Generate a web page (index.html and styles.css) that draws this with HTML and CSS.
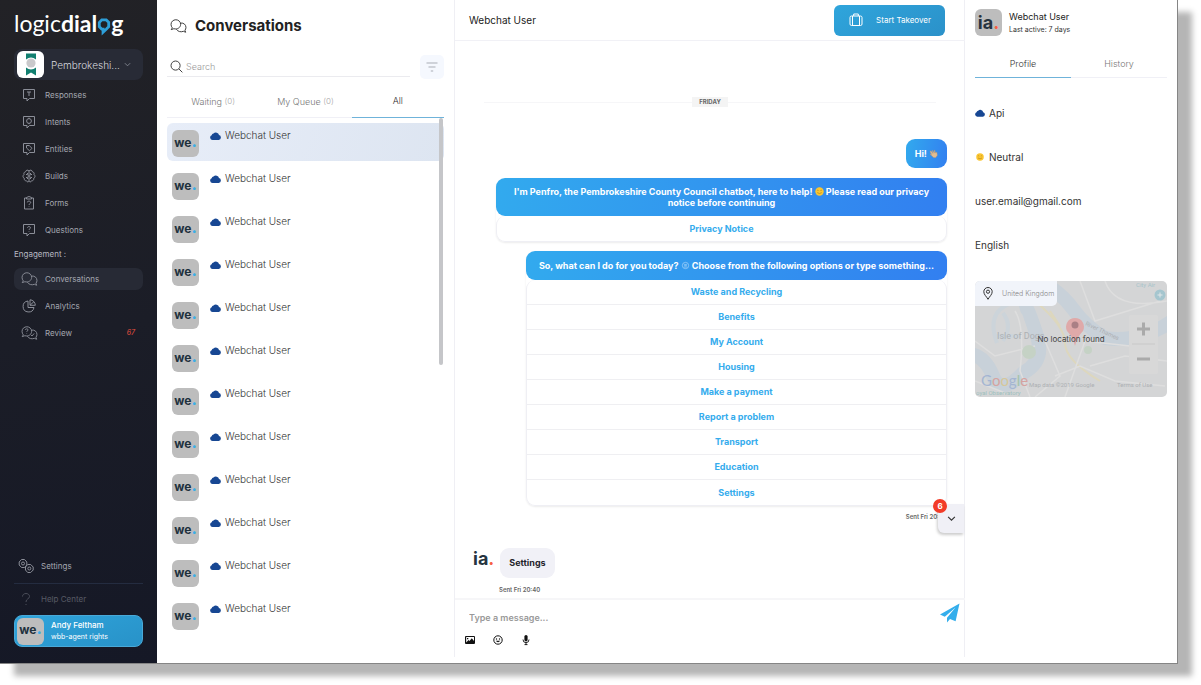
FILE: index.html
```html
<!DOCTYPE html>
<html lang="en">
<head>
<meta charset="utf-8">
<title>Conversations - logicdialog</title>
<link rel="stylesheet" href="styles.css">
</head>
<body>
<svg class="defs" aria-hidden="true">
  <symbol id="chats" viewBox="0 0 18 15"><path d="M2.400 9.500 1.200 11.400 4 10.400C8 11.500 11.300 9 11.300 5.700 11.300 3 9 .8 6.200 .8 3.300 .8 1 3 1 5.700 1 7.200 1.500 8.500 2.400 9.500M11.200 4.400C14.600 3.800 17 6.200 17 9 17 10.200 16.600 11.300 15.900 12.100L16.700 14.200 14.200 13.200C11.500 14.300 8.100 13.500 6.700 10.900"/></symbol>
  <symbol id="bubble" viewBox="0 0 14 14"><path d="M1.500 1.500H12.500V10.500H7.500L5 13V10.500H1.500Z"/></symbol>
  <symbol id="cloud" viewBox="0 0 11 8"><path d="M2.500 8A2.500 2.500 0 0 1 1.700 3.200 2 2 0 0 1 3.500 1.600 3.200 3.200 0 0 1 9 3.100 2.500 2.500 0 0 1 8.700 8Z"/></symbol>
  <symbol id="smile" viewBox="0 0 10 10"><circle cx="5" cy="5" r="4.700" fill="#fbc631"/><path d="M2.300 3.900Q3.200 3 4 3.900M6 3.900Q6.800 3 7.700 3.900M2.500 6.200Q5 8.400 7.500 6.200" fill="none" stroke="#a87a20" stroke-width=".7"/></symbol>
</svg>
<div class="app">
  <aside class="sidebar">
    <a class="logo" href="#" aria-label="logicdialog"><span class="thin">logic</span><span>dial</span><svg viewBox="0 0 14 17"><path d="M6 15V11.800H4.500L2 9.300V4.800L4.600 2H9.400L12 4.600V9.200L9.600 11.600Z"/></svg><span>g</span></a>
    <button class="switcher"><span class="crest"><svg viewBox="0 0 12 22"><path d="M1 0H11V6Q6 2 1 6ZM1 14Q6 18 11 14V22L6 19 1 22Z" fill="#117f70"/><circle cx="6" cy="9.500" r="4.600" fill="#c9c9cb"/></svg></span><span class="switcher-name">Pembrokeshi...</span><svg class="chev" viewBox="0 0 8 8"><path d="M1 2.500 4 5.500 7 2.500"/></svg></button>
    <nav class="nav">
      <a href="#"><svg viewBox="0 0 14 14"><use href="#bubble"/><path d="M5 4H9M7 4V8"/></svg>Responses</a>
      <a href="#"><svg viewBox="0 0 14 14"><use href="#bubble"/><circle cx="7" cy="6" r="2.400"/><path d="M7 2.700V4M7 8V9.200"/></svg>Intents</a>
      <a href="#"><svg viewBox="0 0 14 14"><use href="#bubble"/><path d="M4.500 3.500H7.200L10 6.300 7.500 8.800 4.500 6ZM6 5h.1"/></svg>Entities</a>
      <a href="#"><svg viewBox="0 0 14 14"><path d="M7 2C6 .5 3.800 1 3.700 2.700 2 3 1.600 4.500 2 5.500.6 6.500.7 8.500 2.200 9.200 2 11 3.200 12 4.500 11.800 5 13.300 6.500 13.200 7 12V2C8 .5 10.200 1 10.300 2.700 12 3 12.400 4.500 12 5.500 13.400 6.500 13.300 8.500 11.800 9.200 12 11 10.800 12 9.500 11.800 9 13.300 7.500 13.200 7 12M4 5.500H5.500V4M4 8.500H5.500V10M10 5.500H8.500V4M10 8.500H8.500V10M5.500 7H8.500"/></svg>Builds</a>
      <a href="#"><svg viewBox="0 0 14 14"><path d="M4.500 2H2.500V13H11.500V2H9.500M4.500 3V1.500L7 .5 9.500 1.500V3ZM5.300 6.300C5.300 4.700 8.700 4.700 8.700 6.500 8.700 7.700 7 7.600 7 9M7 10.500V11"/></svg>Forms</a>
      <a href="#"><svg viewBox="0 0 14 14"><use href="#bubble"/><path d="M5.500 4.700C5.500 3.200 8.500 3.200 8.500 4.800 8.500 5.800 7 5.800 7 7M7 8.300V8.900"/></svg>Questions</a>
      <h2>Engagement :</h2>
      <a href="#" class="current"><svg class="wide" viewBox="0 0 18 15"><use href="#chats"/></svg>Conversations</a>
      <a href="#"><svg viewBox="0 0 14 14"><path d="M6 2A5.500 5.500 0 1 0 12 8.500H6ZM8 .8V6.300H13.300A5.500 5.500 0 0 0 8 .8ZM8 6.300 12 2.500"/></svg>Analytics</a>
      <a href="#"><svg class="wide" viewBox="0 0 18 15"><use href="#chats"/><path d="M4.500 4.200C4.500 2.700 7.500 2.700 7.500 4.300 7.500 5.200 6 5.200 6 6.200M6 7.500V8M10.500 9.500 11.700 10.700 14 8"/></svg>Review<em>67</em></a>
    </nav>
    <div class="side-foot">
      <a href="#"><svg class="gears" viewBox="0 0 16 14"><path d="M3.500 .5H6.500L8.800 3V6L6.500 8.500H3.500L1.200 6V3ZM9.700 5.500H12.700L15.200 8V11L12.700 13.500H9.700L7.500 11V8Z"/><circle cx="5" cy="4.500" r="1.500"/><circle cx="11.300" cy="9.500" r="1.500"/></svg>Settings</a>
      <hr>
      <a href="#" class="dim"><svg class="gears" viewBox="0 0 16 14"><path d="M4.500 4.500C4.500.5 11.500.5 11.500 4.500 11.500 7 8 6.500 8 10M8 12V13"/></svg>Help Center</a>
      <button class="me"><span class="we">we<i>.</i></span><span class="me-text"><b>Andy Feltham</b><span>wbb-agent rights</span></span></button>
    </div>
  </aside>

  <section class="list-pane">
    <h1><svg viewBox="0 0 18 15"><use href="#chats"/></svg>Conversations</h1>
    <div class="search-row">
      <label class="search"><svg viewBox="0 0 14 14"><circle cx="6" cy="6" r="4.900"/><path d="M9.600 9.600 13.300 13.300"/></svg><input type="search" placeholder="Search" aria-label="Search"></label>
      <button class="filter" aria-label="Filter"><svg viewBox="0 0 12 10"><path d="M.5 1H11.500M2.500 5H9.500M4.800 9H7.200"/></svg></button>
    </div>
    <div class="tabs"><button>Waiting <small>(0)</small></button><button>My Queue <small>(0)</small></button><button class="on">All</button></div>
    <div class="rows">
      <button class="row selected"><span class="we">we<i>.</i></span><svg><use href="#cloud"/></svg><span>Webchat User</span></button>
      <button class="row"><span class="we">we<i>.</i></span><svg><use href="#cloud"/></svg><span>Webchat User</span></button>
      <button class="row"><span class="we">we<i>.</i></span><svg><use href="#cloud"/></svg><span>Webchat User</span></button>
      <button class="row"><span class="we">we<i>.</i></span><svg><use href="#cloud"/></svg><span>Webchat User</span></button>
      <button class="row"><span class="we">we<i>.</i></span><svg><use href="#cloud"/></svg><span>Webchat User</span></button>
      <button class="row"><span class="we">we<i>.</i></span><svg><use href="#cloud"/></svg><span>Webchat User</span></button>
      <button class="row"><span class="we">we<i>.</i></span><svg><use href="#cloud"/></svg><span>Webchat User</span></button>
      <button class="row"><span class="we">we<i>.</i></span><svg><use href="#cloud"/></svg><span>Webchat User</span></button>
      <button class="row"><span class="we">we<i>.</i></span><svg><use href="#cloud"/></svg><span>Webchat User</span></button>
      <button class="row"><span class="we">we<i>.</i></span><svg><use href="#cloud"/></svg><span>Webchat User</span></button>
      <button class="row"><span class="we">we<i>.</i></span><svg><use href="#cloud"/></svg><span>Webchat User</span></button>
      <button class="row"><span class="we">we<i>.</i></span><svg><use href="#cloud"/></svg><span>Webchat User</span></button>
      <span class="thumb"></span>
    </div>
  </section>

  <main class="chat">
    <header><h2>Webchat User</h2><button class="takeover"><svg viewBox="0 0 14 14"><path d="M2.500 3H11.500Q13 3 13 4.500V11Q13 12.500 11.500 12.500H2.500Q1 12.500 1 11V4.500Q1 3 2.500 3ZM3.500 3V12.500M10.500 3V12.500M4.700 3V1H9.300V3"/></svg>Start Takeover</button></header>
    <div class="messages">
      <div class="day"><span>FRIDAY</span></div>
      <p class="bubble hi">Hi! <svg viewBox="0 0 10 10"><path d="M2 2 4.500 5 3.700 1.300 6 4.500 6 1 7.500 4.500 8.700 3.500 9.200 7 7.500 9.500H5.200L1 5.500 3 6 1.200 3Z" fill="#e2bd91" stroke="#c79a6b" stroke-width=".5"/></svg></p>
      <div class="card wide-card">
        <p class="bubble">I'm Penfro, the Pembrokeshire County Council chatbot, here to help! <svg><use href="#smile"/></svg> Please read our privacy notice before continuing</p>
        <div class="options"><button>Privacy Notice</button></div>
      </div>
      <div class="card menu-card">
        <p class="bubble">So, what can I do for you today? <svg class="glyph" viewBox="0 0 10 10"><circle cx="5" cy="5" r="3.500"/><path d="M3.500 3.800H6.500M3.500 5.200H6.500M3.500 6.700H6.500"/></svg> Choose from the following options or type something...</p>
        <div class="options"><button>Waste and Recycling</button><button>Benefits</button><button>My Account</button><button>Housing</button><button>Make a payment</button><button>Report a problem</button><button>Transport</button><button>Education</button><button>Settings</button></div>
      </div>
      <time class="sent">Sent Fri 20:40</time>
      <div class="reply"><span class="ia">ia<i>.</i></span><p>Settings</p></div>
      <time class="sent left">Sent Fri 20:40</time>
      <button class="jump" aria-label="Jump to latest, 6 new"><span class="count">6</span><svg viewBox="0 0 8 8"><path d="M1 2.500 4 5.500 7 2.500"/></svg></button>
    </div>
    <form class="composer">
      <div class="compose-line"><input type="text" placeholder="Type a message..." aria-label="Message"><button type="button" aria-label="Send"><svg class="plane" viewBox="0 0 20 20"><path d="M19.500.5 0 11.500 4.800 13.700 15.500 4.500 7 14.700V19.500L10 15.900 15.600 18.200Z"/></svg></button></div>
      <div class="tools">
        <button type="button" aria-label="Image"><svg viewBox="0 0 10 10"><path fill-rule="evenodd" d="M1 1H9Q10 1 10 2V8Q10 9 9 9H1Q0 9 0 8V2Q0 1 1 1ZM1.200 7.500 3.500 5 4.500 6 6.800 3.300 9 6V2H1.200ZM2 3H3.300V4.200H2Z"/></svg></button>
        <button type="button" aria-label="Emoji"><svg viewBox="0 0 10 10"><circle cx="5" cy="5" r="4.200" fill="none" stroke="#111"/><circle cx="3.500" cy="4" r=".7"/><circle cx="6.500" cy="4" r=".7"/><path d="M2.700 5.800Q5 8.700 7.300 5.800Z"/></svg></button>
        <button type="button" aria-label="Voice"><svg viewBox="0 0 10 10"><rect x="3.400" y="0" width="3.200" height="6.400" rx="1.600"/><path d="M2 4.500Q2 7.700 5 7.700 8 7.700 8 4.500M5 7.700V10M3.500 9.600H6.500" fill="none" stroke="#111" stroke-width=".9"/></svg></button>
      </div>
    </form>
  </main>

  <aside class="profile">
    <div class="who"><span class="ia boxed">ia<i>.</i></span><div><h2>Webchat User</h2><p>Last active: 7 days</p></div></div>
    <div class="tabs"><button class="on">Profile</button><button>History</button></div>
    <ul>
      <li><svg><use href="#cloud"/></svg>Api</li>
      <li><svg><use href="#smile"/></svg>Neutral</li>
      <li>user.email@gmail.com</li>
      <li>English</li>
    </ul>
    <div class="map">
      <svg class="map-art" viewBox="0 0 192 116" preserveAspectRatio="xMidYMid slice">
        <path d="M-5 73Q10 75 18 95T48 92Q70 80 62 55T52 28Q45 10 60 -5M58 -5Q85 10 98 28T130 57Q165 62 197 40" fill="none" stroke="#c8d1d9" stroke-width="14"/>
        <path d="M22 62Q12 35 30 25T60 20M18 55H45M28 60Q38 45 28 32" fill="none" stroke="#ccd4da" stroke-width="4"/>
        <path d="M60 20Q90 45 90 62T125 100M75 30 85 45" fill="none" stroke="#ddd7bd" stroke-width="2"/>
        <path d="M0 60 20 75 60 65M40 30Q50 45 45 90L55 116M80 95 105 85 140 100 190 105M90 116 110 60 155 65M105 0 120 40 185 20M130 0Q140 30 192 20M115 85 150 75 192 80M70 60 85 95 60 116M0 100 30 112" fill="none" stroke="#dedede" stroke-width="1.500"/>
        <circle cx="54" cy="71" r="7" fill="#c5d2c5"/><circle cx="113" cy="69" r="4" fill="#c5d2c5"/>
        <circle cx="185" cy="14" r="5.500" fill="#a5c6cf"/><path d="M182.500 14H187.500M185 11.500V16.500" stroke="#e2e6e8"/>
        <path d="M100 65Q98 56 92 50A9 9 0 1 1 108 50Q102 56 100 65Z" fill="#dfa9a9"/><circle cx="100" cy="44" r="3.500" fill="#aa8085"/>
        <rect x="154" y="34" width="29" height="59" rx="2" fill="#d8d8d8"/><path d="M157 63H180" stroke="#c8c8c8"/><path d="M162 48H175M168.500 41.500V54.500M162 78H175" stroke="#aaa" stroke-width="3"/>
        <g class="map-text"><text x="22" y="58">Isle of Dogs</text><text x="161" y="6" class="fine" fill="#a7c3ca">City Air</text><text x="110" y="44" transform="rotate(25 110 44)" class="fine">River Thames</text><text x="1" y="114" class="fine" fill="#9dbfbd">oyal Observatory</text><text x="54" y="106" class="fine">Map data ©2019 Google</text><text x="142" y="106" class="fine">Terms of Use</text></g>
        <text x="6" y="105" class="google"><tspan fill="#a4b5d2">G</tspan><tspan fill="#d6a3a0">o</tspan><tspan fill="#d7c79a">o</tspan><tspan fill="#a4b5d2">g</tspan><tspan fill="#a4c3ab">l</tspan><tspan fill="#d6a3a0">e</tspan></text>
      </svg>
      <span class="country"><svg viewBox="0 0 10 13"><path d="M5 12.300C3.500 9.500.8 7.500.8 4.700A4.200 4.200 0 0 1 9.200 4.700C9.200 7.500 6.500 9.500 5 12.300Z"/><circle cx="5" cy="4.700" r="1.600"/></svg>United Kingdom</span>
      <span class="none">No location found</span>
    </div>
  </aside>
</div>
</body>
</html>
```

FILE: styles.css
```css
* { box-sizing: border-box; }
body {
  margin: 0;
  min-height: 100vh;
  padding: 0 23px 21px 0;
  display: grid;
  background: #fff;
  color: #333;
  font: 10px/14px Inter, "Liberation Sans", sans-serif;
  overflow: hidden;
}
h1, h2, p, ul { margin: 0; padding: 0; font-weight: 400; }
button { border: 0; padding: 0; background: none; font: inherit; color: inherit; text-align: inherit; }
input { border: 0; padding: 0; background: none; font: inherit; outline: 0; min-width: 0; }
a { color: inherit; text-decoration: none; }
i { font-style: normal; }
svg { flex: none; overflow: visible; }
.defs { position: absolute; width: 0; height: 0; }

.app {
  display: grid;
  grid-template-columns: 157px 298px minmax(0, 1fr) 212px;
  background: #fff;
  border: solid #858585;
  border-width: 0 1px 1px 0;
  box-shadow: 14px 12px 6px #b5b5b5;
}

/* Sidebar */
.sidebar {
  display: flex;
  flex-direction: column;
  padding: 8px 14px 16px;
  background: linear-gradient(170deg, #222226 0%, #1b1d27 50%, #151826 100%);
  color: #a4a7b0;
  font-size: 8px;
}
.logo {
  display: flex;
  align-items: center;
  height: 30px;
  margin-bottom: 11px;
  color: #fff;
  font: 700 23px/28px Lato, sans-serif;
}
.logo .thin { font-weight: 400; }
.logo svg { width: 14px; height: 16px; margin-top: 6px; fill: none; stroke: #2e9fd9; stroke-width: 3; }
.switcher {
  display: flex;
  align-items: center;
  height: 31px;
  margin-bottom: 4px;
  padding: 0 12px 0 3px;
  border-radius: 8px;
  background: #282b36;
  color: #d7d9df;
  font-size: 10px;
  font-weight: 300;
}
.crest { display: grid; place-items: center; width: 27px; height: 27px; border-radius: 6px; background: #fff; }
.crest svg { width: 12px; height: 23px; }
.switcher-name { flex: 1; padding-left: 7px; }
.chev { width: 7px; height: 7px; fill: none; stroke: #858994; }
.nav, .side-foot { display: flex; flex-direction: column; }
.nav { gap: 5px; }
.nav a, .side-foot a {
  display: flex;
  align-items: center;
  height: 22px;
  padding: 0 8px;
  border-radius: 7px;
}
.nav svg, .side-foot svg { width: 14px; height: 14px; margin-right: 9px; fill: none; stroke: #8b8e98; stroke-width: 1; }
.nav svg.wide { width: 17px; height: 14px; margin: 0 7px 0 -1px; }
.nav h2 { height: 17px; font-size: 8px; line-height: 17px; color: #b6b9c1; }
.nav .current { background: #272a35; }
.nav em { margin-left: auto; color: #e8503f; font-size: 7px; }
.side-foot { margin-top: auto; }
.side-foot a { padding: 0 4px; }
.side-foot a svg { width: 16px; margin-right: 7px; }
.side-foot hr { width: 100%; margin: 6px 0 4px; border: 0; border-top: 1px solid #242c40; }
.side-foot .dim { opacity: .45; }
.me {
  display: flex;
  align-items: center;
  height: 32px;
  margin-top: 5px;
  padding: 0 2px;
  border-radius: 8px;
  border: 1px solid #49a9d8;
  background: linear-gradient(160deg, #2fa4db, #2892c8);
  color: #fff;
}
.me-text { display: grid; line-height: 12px; padding-left: 7px; font-size: 7px; }
.me-text b { font-size: 8px; font-weight: 500; }
.we {
  display: grid;
  grid-auto-flow: column;
  place-content: center;
  align-items: baseline;
  width: 27px;
  height: 27px;
  padding-bottom: 2px;
  border-radius: 6px;
  background: #bdbdbd;
  color: #1e313e;
  font: 700 12px/22px Inter, sans-serif;
}
.we i { color: #38ade8; font-size: 16px; line-height: 16px; }

/* Conversation list */
.list-pane { padding: 15px 11px 6px 10px; }
.list-pane, .chat { background: linear-gradient(#efeff4, #efeff4) right top / 1px calc(100% - 6px) no-repeat; }
h1 { display: flex; align-items: center; height: 22px; font: 700 15px/22px Inter, sans-serif; color: #222; }
h1 svg { width: 17px; height: 14px; margin: 0 8px 0 3px; fill: none; stroke: #333; stroke-width: 1; }
.search-row { display: flex; gap: 10px; align-items: center; margin-top: 18px; }
.search { display: flex; align-items: center; gap: 3px; flex: 1; height: 20px; padding-left: 3px; border-bottom: 1px solid #ebebef; }
.search svg { width: 13px; height: 13px; fill: none; stroke: #333; stroke-width: 1; }
.search input { flex: 1; font-size: 9px; font-weight: 300; }
::placeholder { color: #999; opacity: 1; }
.filter { display: grid; place-items: center; width: 24px; height: 24px; border-radius: 5px; background: #f5f8fe; }
.filter svg { width: 12px; height: 10px; fill: none; stroke: #a9adb5; stroke-width: 1; }
.tabs { display: flex; border-bottom: 1px solid #f0f0f6; }
.tabs button { flex: 1; height: 33px; margin-bottom: -1px; text-align: center; font-size: 9px; font-weight: 300; color: #777; border-bottom: 1px solid transparent; }
.tabs small { font-size: 8px; color: #aaa; vertical-align: 1px; }
.tabs .on { color: #333; border-color: #6fb3da; }
.list-pane .tabs { margin-top: 6px; }
.rows { position: relative; display: grid; gap: 5px; padding-top: 5px; }
.row { display: flex; align-items: flex-start; height: 38px; padding: 6px 5px 0; border-radius: 6px; line-height: 13px; font-weight: 300; color: #333; }
.row.selected { background: linear-gradient(110deg, #e7edf8, #dde5f1); }
.row svg { width: 11px; height: 8px; margin: 3px 4px 0 11px; fill: #174793; }
.row .we { margin-top: 1px; }
.thumb { position: absolute; top: 0; right: 1px; width: 4px; height: 247px; border-radius: 2px; background: #c5c6c9; }

/* Chat */
.chat { display: flex; flex-direction: column; font-weight: 700; }
.chat header { display: flex; align-items: center; justify-content: space-between; height: 41px; padding: 0 20px 0 14px; border-bottom: 1px solid #f1f1f6; }
.chat header h2 { font-size: 10px; color: #222; }
.takeover { display: flex; align-items: center; gap: 13px; height: 31px; padding: 0 14px 0 15px; border-radius: 6px; background: linear-gradient(150deg, #2fa5dc, #2b91c9); color: #fff; font-weight: 400; font-size: 8px; }
.takeover svg { width: 14px; height: 14px; fill: none; stroke: #fff; stroke-width: 1; }
.messages { position: relative; flex: 1; display: flex; flex-direction: column; align-items: flex-end; padding: 55px 18px 0; font-size: 9px; }
.day { display: flex; align-items: center; align-self: stretch; gap: 0; margin: 0 11px 31px; height: 12px; }
.day::before, .day::after { content: ""; flex: 1; height: 1px; background: #f6f6f8; }
.day span { padding: 0 7px; background: #f4f4f4; color: #666; font-size: 6px; line-height: 10px; }
.bubble { padding: 9px 8px; border-radius: 9px; background: linear-gradient(100deg, #32aaee, #327ff0); color: #fff; font-weight: 700; line-height: 11px; text-align: center; }
.bubble svg { width: 9px; height: 9px; vertical-align: -1px; }
.bubble .glyph { fill: none; stroke: #b6dafa; stroke-width: .7; }
.hi { padding: 9px; margin-bottom: 10px; }
.card { border-radius: 9px; box-shadow: 0 1px 2px #00000014; }
.wide-card { width: 451px; max-width: 100%; margin-bottom: 9px; }
.wide-card .bubble { padding: 8px 10px; }
.menu-card { width: 421px; max-width: 100%; }
.options { display: grid; border: 1px solid #efeff4; border-top: 0; border-radius: 9px; }
.options button { height: 25px; text-align: center; color: #35aced; border-bottom: 1px solid #efeff2; }
.options button:last-child { border: 0; }
.sent { margin: 5px 0 0; font-size: 6px; line-height: 12px; color: #666; font-weight: 600; }
.reply { display: flex; align-self: flex-start; gap: 6px; margin-top: 25px; }
.reply p { padding: 8px 9px; border-radius: 9px; background: #f1f1f7; color: #24242c; font-weight: 700; }
.ia { color: #273440; font: 700 18px/22px Inter, sans-serif; }
.ia i { color: #f75f45; }
.sent.left { align-self: flex-start; margin: 6px 0 0 26px; }
.jump { position: absolute; right: 1px; bottom: 65px; display: grid; place-items: center; width: 26px; height: 29px; border-radius: 2px 0 0 6px; background: #f0f0f6; box-shadow: -1px 2px 3px #0003; }
.jump svg { width: 9px; height: 9px; fill: none; stroke: #333; stroke-width: 1; }
.count { position: absolute; top: -5px; left: -5px; width: 14px; height: 14px; border-radius: 50%; background: #f23c28; color: #fff; font-size: 8px; line-height: 14px; text-align: center; }
.composer { height: 65px; padding: 6px 5px 0 14px; border-top: 2px solid #f6f6f8; }
.compose-line { display: flex; align-items: center; height: 24px; }
.compose-line input { flex: 1; font-size: 9px; font-weight: 600; }
.plane { display: block; width: 20px; height: 20px; margin-top: -10px; fill: #34aeec; }
.tools { display: flex; gap: 18px; margin-left: -4px; padding-top: 5px; }
.tools button { display: grid; place-items: center; width: 10px; height: 10px; }
.tools svg { width: 10px; height: 10px; fill: #111; }

/* Profile */
.profile { padding: 9px 10px 0; font-weight: 300; }
.who { display: flex; gap: 7px; }
.who h2 { font-size: 9px; line-height: 15px; color: #222; }
.who p { font-size: 7px; line-height: 12px; font-weight: 400; }
.boxed { display: grid; grid-auto-flow: column; place-content: center; width: 27px; height: 27px; border-radius: 6px; background: #bdbdbd; }
.profile .tabs { margin-top: 15px; }
.profile .tabs button { height: 27px; }
ul { display: grid; gap: 30px; margin: 28px 0 29px; list-style: none; }
li { display: flex; align-items: center; gap: 4px; height: 14px; }
li svg { width: 10px; height: 8px; fill: #174793; }
.map { position: relative; height: 116px; overflow: hidden; border-radius: 5px; background: #d4d5d6; }
.map-art { display: block; width: 100%; height: 100%; }
.map-text { font: 9px Roboto, sans-serif; fill: #adb0b3; }
.fine { font-size: 6px; }
.google { font: 15px Lato, sans-serif; }
.country { position: absolute; top: 0; left: 0; display: flex; align-items: center; gap: 9px; height: 25px; padding: 0 3px 0 8px; border-radius: 0 0 5px 0; background: #f1f4fa; color: #888; font-size: 7px; }
.country svg { width: 10px; height: 13px; fill: none; stroke: #333; stroke-width: 1; }
.none { position: absolute; top: 51px; left: 0; right: 0; text-align: center; font-size: 8px; font-weight: 400; color: #444; }
```
